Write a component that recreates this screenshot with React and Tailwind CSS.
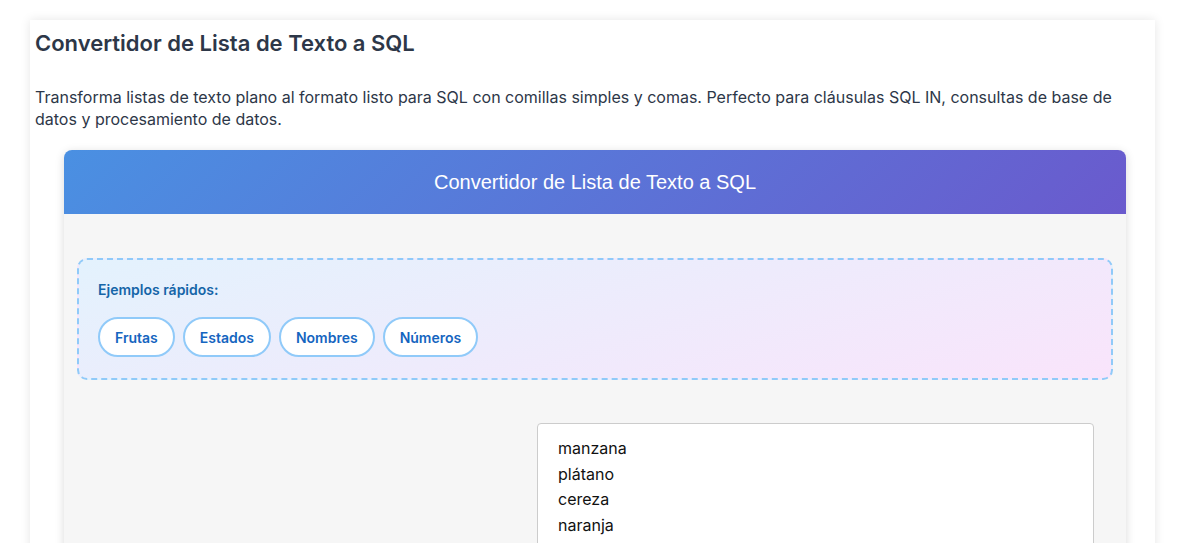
import React from "react";

const examples = ["Frutas", "Estados", "Nombres", "Números"];

export default function App() {
  return (
    <div className="min-h-[900px] bg-white pt-[20px] pl-[30px]">
      <div className="w-[1125px] bg-white px-[5px] pt-[9px] pb-10 shadow-[0_0_10px_rgba(0,0,0,0.1)]">
        <h2 className="font-['Inter',sans-serif] text-[22px] font-semibold leading-[28px] text-[#2d3748]">
          Convertidor de Lista de Texto a SQL
        </h2>

        <p className="mt-[29px] font-['Inter',sans-serif] text-[16px] leading-[22px] text-[#2d3748]">
          Transforma listas de texto plano al formato listo para SQL con comillas simples y comas. Perfecto para cláusulas SQL IN, consultas de base de datos y procesamiento de datos.
        </p>

        {/* Tool */}
        <div className="ml-[29px] mt-[20px] w-[1062px] overflow-hidden rounded-t-[8px] bg-[#f6f6f6] shadow-[0_2px_10px_rgba(0,0,0,0.15)]">
          <div className="flex h-[64px] items-center justify-center bg-[linear-gradient(135deg,#4a90e2,#6a5acd)] font-['Liberation_Sans',Arial,sans-serif] text-[20px] text-white">
            Convertidor de Lista de Texto a SQL
          </div>

          <div className="px-[13px] pt-[44px] pb-10">
            {/* Quick examples */}
            <div className="rounded-[10px] border-2 border-dashed border-[#90caf9] bg-[linear-gradient(165deg,#e3f2fd,#f9e4fb)] px-[19px] pt-[20px] pb-[21px]">
              <p className="font-['Inter',sans-serif] text-[14px] font-semibold leading-[20px] text-[#1565a8]">
                Ejemplos rápidos:
              </p>
              <div className="mt-[17px] flex gap-[8px]">
                {examples.map((ex) => (
                  <button
                    key={ex}
                    className="h-[40px] rounded-full border-2 border-[#90caf9] bg-white px-[15px] font-['Inter',sans-serif] text-[14px] font-semibold text-[#1565c0]"
                  >
                    {ex}
                  </button>
                ))}
              </div>
            </div>

            {/* Input */}
            <div className="mt-[43px] flex justify-end pr-[19px]">
              <textarea
                readOnly
                defaultValue={"manzana\nplátano\ncereza\nnaranja\nuva"}
                className="h-[260px] w-[557px] resize-none rounded-[4px] border border-[#cccccc] bg-white px-[20px] pt-[12px] font-['Inter',sans-serif] text-[16px] leading-[25.6px] text-[#111] outline-none"
              />
            </div>
          </div>
        </div>
      </div>
    </div>
  );
}
